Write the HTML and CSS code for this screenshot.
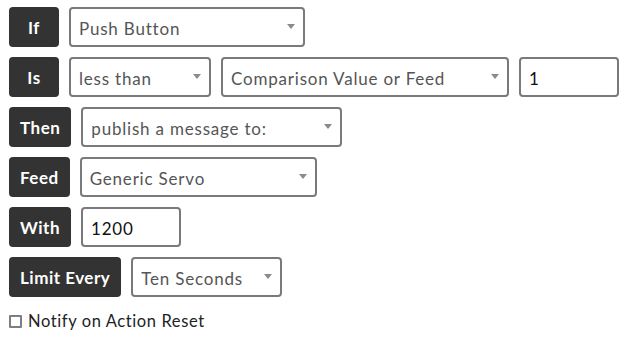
FILE: index.html
```html
<!DOCTYPE html>
<html>
<head>
<meta charset="utf-8">
<link rel="stylesheet" href="styles.css">
</head>
<body>
<form class="rule">
  <div class="row">
    <span class="tag tag-min">If</span>
    <div class="select sel-trigger"><span>Push Button</span><svg class="caret" viewBox="0 0 8 5"><path d="M0 0h8L4 5z"/></svg></div>
  </div>
  <div class="row">
    <span class="tag tag-min">Is</span>
    <div class="select sel-op"><span>less than</span><svg class="caret" viewBox="0 0 8 5"><path d="M0 0h8L4 5z"/></svg></div>
    <div class="select sel-compare"><span>Comparison Value or Feed</span><svg class="caret" viewBox="0 0 8 5"><path d="M0 0h8L4 5z"/></svg></div>
    <div class="input inp-value">1</div>
  </div>
  <div class="row">
    <span class="tag">Then</span>
    <div class="select sel-action"><span>publish a message to:</span><svg class="caret" viewBox="0 0 8 5"><path d="M0 0h8L4 5z"/></svg></div>
  </div>
  <div class="row">
    <span class="tag">Feed</span>
    <div class="select sel-feed"><span>Generic Servo</span><svg class="caret" viewBox="0 0 8 5"><path d="M0 0h8L4 5z"/></svg></div>
  </div>
  <div class="row">
    <span class="tag">With</span>
    <div class="input inp-value">1200</div>
  </div>
  <div class="row">
    <span class="tag">Limit Every</span>
    <div class="select sel-limit"><span>Ten Seconds</span><svg class="caret" viewBox="0 0 8 5"><path d="M0 0h8L4 5z"/></svg></div>
  </div>
  <label class="notify"><span class="box"></span>Notify on Action Reset</label>
</form>
</body>
</html>
```
FILE: styles.css
```css
* { box-sizing: border-box; }
html, body { margin: 0; background: #fff; overflow: hidden; }
body {
  font-family: Lato, "Open Sans", sans-serif;
  font-size: 16px;
}
.rule {
  padding: 7px 9px;
  display: flex;
  flex-direction: column;
  gap: 10px;
}
.row {
  display: flex;
  align-items: stretch;
  gap: 10px;
  height: 40px;
}
.row > * { flex: none; }
.tag {
  background: #333;
  color: #fff;
  font-weight: 700;
  font-size: 17px;
  letter-spacing: 0.5px;
  border-radius: 4px;
  padding: 1px 11px 0 11px;
  display: flex;
  align-items: center;
  justify-content: center;
}
.tag-min { min-width: 50px; }
.select, .input {
  border: 2px solid #7a7a7a;
  border-radius: 4px;
  display: flex;
  align-items: center;
  padding: 3px 8px 0 8px;
  font-size: 17px;
  letter-spacing: 0.8px;
}
.select {
  color: #555;
  justify-content: space-between;
}
.input { color: #111; }
.caret {
  width: 8px;
  height: 5px;
  fill: #8a8a8a;
  margin-top: -4px;
  flex: none;
}
.sel-trigger { width: 236px; }
.sel-op { width: 142px; }
.sel-compare { width: 288px; }
.inp-value { width: 100px; }
.sel-action { width: 261px; }
.sel-feed { width: 237px; }
.sel-limit { width: 151px; }
.notify {
  display: flex;
  align-items: center;
  gap: 6px;
  margin-top: 4px;
  color: #222;
  font-size: 16.5px;
  letter-spacing: 0.6px;
}
.box {
  width: 13px;
  height: 13px;
  border: 2px solid #7d7d85;
  border-radius: 1px;
  background: #fff;
}
```
